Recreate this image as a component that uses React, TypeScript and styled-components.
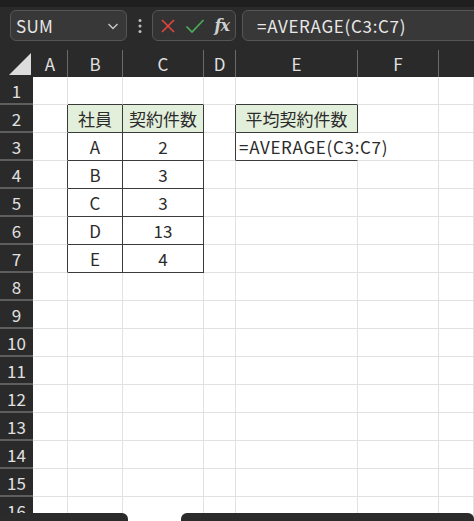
import React from "react";
import styled, { createGlobalStyle } from "styled-components";

const GlobalStyle = createGlobalStyle`
  html, body { margin: 0; padding: 0; background: #ffffff; }
  body { font-family: "Noto Sans CJK JP", "Noto Sans", sans-serif; }
  * { box-sizing: border-box; }
`;

const FONT = `"Noto Sans CJK JP", "Noto Sans", sans-serif`;

const Page = styled.div`
  position: relative;
  width: 474px;
  height: 521px;
  overflow: hidden;
  display: flex;
  flex-direction: column;
  background: #ffffff;
`;

const Toolbar = styled.div`
  height: 50px;
  flex: none;
  background: #2a2a2a;
  border-top: 7px solid #1f1f1f;
  display: flex;
  align-items: flex-start;
  padding: 3px 0 0 10px;
`;

const NameBox = styled.div`
  width: 117px;
  height: 31px;
  border: 1px solid #555555;
  border-radius: 6px;
  background: #383838;
  display: flex;
  align-items: center;
  justify-content: space-between;
  padding: 0 6px 0 5px;
  color: #e6e6e6;
  font-family: ${FONT};
  font-size: 17px;
  letter-spacing: 0.3px;
`;

const Dots = styled.div`
  width: 25px;
  height: 31px;
  display: flex;
  align-items: center;
  justify-content: center;
`;

const Controls = styled.div`
  width: 84px;
  height: 31px;
  border: 1px solid #555555;
  border-radius: 6px;
  background: #333333;
  display: flex;
  align-items: center;
  justify-content: space-between;
  padding: 0 6px 0 7px;
`;

const Fx = styled.span`
  font-family: "DejaVu Serif", "Liberation Serif", serif;
  font-style: italic;
  font-weight: bold;
  font-size: 16px;
  color: #cfcfcf;
  letter-spacing: -1px;
`;

const FormulaBox = styled.div`
  flex: 1;
  height: 31px;
  margin-left: 6px;
  margin-right: -10px;
  border: 1px solid #555555;
  border-radius: 6px;
  background: #383838;
  display: flex;
  align-items: center;
  padding-left: 14px;
  color: #e8e8e8;
  font-family: ${FONT};
  font-size: 17px;
  letter-spacing: 0.7px;
  white-space: nowrap;
`;

const Sheet = styled.div`
  flex: 1;
  display: grid;
  grid-template-columns: 33px 35px 55px 81px 32px 122px 81px 1fr;
  grid-template-rows: 27px;
  grid-auto-rows: 28px;
  overflow: hidden;
`;

const Corner = styled.div`
  background: #2a2a2a;
  display: flex;
  align-items: flex-end;
  justify-content: flex-end;
  padding: 0 2px 2px 0;
`;

const ColHeader = styled.div<{ $last?: boolean }>`
  background: #2a2a2a;
  color: #e0e0e0;
  font-family: ${FONT};
  font-size: 17px;
  display: flex;
  align-items: center;
  justify-content: center;
  border-right: ${(p) => (p.$last ? "none" : "1px solid #6a6a6a")};
`;

const RowHeader = styled.div`
  background: #2a2a2a;
  color: #e0e0e0;
  font-family: ${FONT};
  font-size: 17px;
  display: flex;
  align-items: center;
  justify-content: center;
  border-bottom: 2px solid #5e5e5e;
  padding-top: 1px;
`;

const Cell = styled.div<{
  $right: boolean;
  $bottom: boolean;
  $fill?: boolean;
  $align: "center" | "left";
  $overflow?: boolean;
  $noRight?: boolean;
}>`
  position: relative;
  background: ${(p) => (p.$fill ? "#e2efda" : "#ffffff")};
  border-right: 1px solid
    ${(p) => (p.$noRight ? "transparent" : p.$right ? "#3a3a3a" : "#e1e1e1")};
  border-bottom: 1px solid ${(p) => (p.$bottom ? "#3a3a3a" : "#e1e1e1")};
  color: #2b2b2b;
  font-family: ${FONT};
  font-size: 17px;
  letter-spacing: ${(p) => (p.$overflow ? "0.7px" : "0")};
  display: flex;
  align-items: center;
  justify-content: ${(p) => (p.$align === "center" ? "center" : "flex-start")};
  padding-left: ${(p) => (p.$align === "left" ? "3px" : "0")};
  white-space: nowrap;
  overflow: ${(p) => (p.$overflow ? "visible" : "hidden")};
  z-index: ${(p) => (p.$overflow ? 2 : 1)};
`;

const BottomBar = styled.div`
  position: absolute;
  left: 0;
  right: 0;
  bottom: 0;
  height: 8px;
  display: flex;
  gap: 53px;
  z-index: 5;
`;

const BarSeg = styled.div<{ $w?: number }>`
  background: #2b2b2b;
  border-radius: 6px 6px 0 0;
  ${(p) => (p.$w ? `width: ${p.$w}px;` : "flex: 1;")}
`;

type Side = "T" | "L" | "B" | "R";
const boxes: Record<string, Side[]> = {};
for (let r = 2; r <= 7; r++) {
  boxes[`${r},2`] = ["T", "L", "B", "R"];
  boxes[`${r},3`] = ["T", "L", "B", "R"];
}
boxes["2,5"] = ["T", "L", "B", "R"];
boxes["3,5"] = ["T", "L", "B"];

const has = (r: number, c: number, s: Side) => (boxes[`${r},${c}`] || []).includes(s);

const content: Record<string, string> = {
  "2,2": "社員",
  "2,3": "契約件数",
  "3,2": "A",
  "3,3": "2",
  "4,2": "B",
  "4,3": "3",
  "5,2": "C",
  "5,3": "3",
  "6,2": "D",
  "6,3": "13",
  "7,2": "E",
  "7,3": "4",
  "2,5": "平均契約件数",
  "3,5": "=AVERAGE(C3:C7)",
};
const filled = new Set(["2,2", "2,3", "2,5"]);
const cols = ["A", "B", "C", "D", "E", "F", ""];

const ChevronIcon = () => (
  <svg width="14" height="14" viewBox="0 0 14 14">
    <path d="M2.5 5 L7 9.5 L11.5 5" fill="none" stroke="#c8c8c8" strokeWidth="1.4" />
  </svg>
);

const DotsIcon = () => (
  <svg width="4" height="16" viewBox="0 0 4 16">
    <circle cx="2" cy="2.5" r="1.5" fill="#bdbdbd" />
    <circle cx="2" cy="8" r="1.5" fill="#bdbdbd" />
    <circle cx="2" cy="13.5" r="1.5" fill="#bdbdbd" />
  </svg>
);

const CrossIcon = () => (
  <svg width="16" height="16" viewBox="0 0 16 16">
    <path d="M2 2 L14 14 M14 2 L2 14" stroke="#e5453d" strokeWidth="1.6" fill="none" />
  </svg>
);

const CheckIcon = () => (
  <svg width="20" height="16" viewBox="0 0 20 16">
    <path d="M1.5 8.5 L7 14 L18.5 2" stroke="#4caf5a" strokeWidth="1.6" fill="none" />
  </svg>
);

const CornerTriangle = () => (
  <svg width="22" height="22" viewBox="0 0 22 22">
    <path d="M0 22 L22 0 L22 22 Z" fill="#dcdcdc" />
  </svg>
);

export default function App() {
  const rows = Array.from({ length: 17 }, (_, i) => i + 1);
  return (
    <>
      <GlobalStyle />
      <Page>
        <Toolbar>
          <NameBox>
            <span>SUM</span>
            <ChevronIcon />
          </NameBox>
          <Dots>
            <DotsIcon />
          </Dots>
          <Controls>
            <CrossIcon />
            <CheckIcon />
            <Fx>fx</Fx>
          </Controls>
          <FormulaBox>=AVERAGE(C3:C7)</FormulaBox>
        </Toolbar>
        <Sheet>
          <Corner>
            <CornerTriangle />
          </Corner>
          {cols.map((c, i) => (
            <ColHeader key={`h${i}`} $last={i === cols.length - 1}>
              {c}
            </ColHeader>
          ))}
          {rows.map((r) => (
            <React.Fragment key={r}>
              <RowHeader>{r}</RowHeader>
              {cols.map((_, ci) => {
                const c = ci + 1;
                const key = `${r},${c}`;
                const right = has(r, c, "R") || has(r, c + 1, "L");
                const bottom = has(r, c, "B") || has(r + 1, c, "T");
                const isFormula = key === "3,5";
                return (
                  <Cell
                    key={key}
                    $right={right}
                    $bottom={bottom}
                    $fill={filled.has(key)}
                    $align={isFormula ? "left" : "center"}
                    $overflow={isFormula}
                    $noRight={isFormula}
                  >
                    {content[key] || ""}
                  </Cell>
                );
              })}
            </React.Fragment>
          ))}
        </Sheet>
        <BottomBar>
          <BarSeg $w={128} />
          <BarSeg />
        </BottomBar>
      </Page>
    </>
  );
}
